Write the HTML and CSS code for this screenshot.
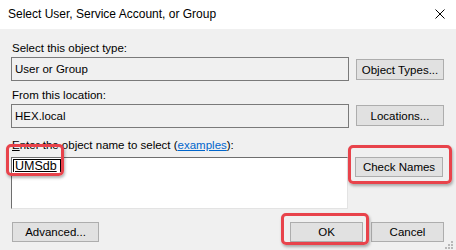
FILE: index.html
```html
<!DOCTYPE html>
<html>
<head>
<meta charset="utf-8">
<link rel="stylesheet" href="styles.css">
</head>
<body>
<div class="dialog">
  <div class="titlebar">
    <span class="title">Select User, Service Account, or Group</span>
    <svg class="close" width="10" height="10" viewBox="0 0 10 10"><path d="M0.5 0.5 L9.5 9.5 M9.5 0.5 L0.5 9.5" stroke="#000" stroke-width="1" fill="none"/></svg>
  </div>
  <div class="content">
    <div class="label l1">Select this object type:</div>
    <div class="row">
      <div class="field">User or Group</div>
      <div class="btn btn-top">Object Types...</div>
    </div>
    <div class="label l2">From this location:</div>
    <div class="row">
      <div class="field">HEX.local</div>
      <div class="btn btn-top">Locations...</div>
    </div>
    <div class="label l3"><span class="ul">E</span>nter the object name to select (<span class="link">examples</span>):</div>
    <div class="row">
      <div class="area"><span class="name">UMSdb</span></div>
      <div class="btn">Check Names</div>
    </div>
    <div class="bottom">
      <div class="btn adv">Advanced...</div>
      <div class="right">
        <div class="btn ok">OK</div>
        <div class="btn cancel">Cancel</div>
      </div>
    </div>
  </div>
  <div class="hl hl-name"></div>
  <div class="hl hl-check"></div>
  <div class="hl hl-ok"></div>
  <svg class="grip" width="8" height="8" viewBox="0 0 8 8">
    <rect x="6" y="0" width="2" height="2" fill="#b8b8b8"/>
    <rect x="3" y="3" width="2" height="2" fill="#b8b8b8"/>
    <rect x="6" y="3" width="2" height="2" fill="#b8b8b8"/>
    <rect x="0" y="6" width="2" height="2" fill="#b8b8b8"/>
    <rect x="3" y="6" width="2" height="2" fill="#b8b8b8"/>
    <rect x="6" y="6" width="2" height="2" fill="#b8b8b8"/>
  </svg>
</div>
</body>
</html>
```

FILE: styles.css
```css
html, body {
  margin: 0;
  padding: 0;
}
body {
  width: 456px;
  height: 250px;
  overflow: hidden;
  font-family: "Liberation Sans", Arial, sans-serif;
  font-size: 11.5px;
  color: #000;
}
.dialog {
  position: relative;
  width: 456px;
  height: 250px;
  background: #f0f0f0;
}
.titlebar {
  height: 29px;
  background: #fff;
  display: flex;
  align-items: center;
  justify-content: space-between;
  padding: 0 11px 0 8px;
  box-sizing: border-box;
}
.title {
  font-size: 12px;
  margin-top: -1px;
}
.close {
  display: block;
  margin-top: -2px;
}
.content {
  padding: 12px 0 0 11px;
}
.label {
  height: 15px;
  line-height: 15px;
  padding-left: 1px;
}
.l2 { margin-top: 7px; }
.l3 { margin-top: 10px; }
.ul { text-decoration: underline; }
.link {
  color: #0066cc;
  text-decoration: underline;
}
.row {
  display: flex;
  column-gap: 7px;
  align-items: flex-start;
  margin-top: 1px;
}
.l3 + .row { margin-top: 4px; }
.field {
  width: 338px;
  height: 24px;
  box-sizing: border-box;
  border: 1px solid #7a7a7a;
  background: #f0f0f0;
  line-height: 22px;
  padding-left: 3px;
}
.area {
  width: 337px;
  height: 52px;
  box-sizing: border-box;
  background: #fff;
  border-top: 1px solid #6e6e6e;
  border-left: 1px solid #6e6e6e;
  border-right: 1px solid #e3e3e3;
  border-bottom: 1px solid #e3e3e3;
  padding: 1px 0 0 1px;
}
.name {
  display: inline-block;
  border: 1px solid #000;
  border-bottom: none;
  height: 12px;
  line-height: 13px;
  padding: 0 3px 0 1px;
  font-size: 12.5px;
  text-decoration: underline;
  text-underline-offset: 1px;
  overflow: visible;
}
.btn {
  width: 88px;
  height: 20px;
  box-sizing: border-box;
  background: #e1e1e1;
  border: 1px solid #adadad;
  display: flex;
  align-items: center;
  justify-content: center;
}
.btn-top { margin-top: 2px; height: 21px; }
.row + .label + .row .btn-top { margin-top: 1px; }
.bottom {
  display: flex;
  justify-content: space-between;
  margin-top: 13px;
  width: 433px;
}
.adv { width: 87px; margin-left: 1px; }
.right {
  display: flex;
  column-gap: 8px;
}
.ok { width: 73px; }
.cancel { width: 73px; }
.hl {
  position: absolute;
  border: 3px solid #e8434b;
  border-radius: 5px;
  box-sizing: border-box;
  box-shadow: 1px 2px 3px rgba(0,0,0,0.3);
}
.hl-name { left: 6px; top: 144px; width: 58px; height: 32px; }
.hl-check { left: 348px; top: 145px; width: 104px; height: 39px; }
.hl-ok { left: 281px; top: 213px; width: 88px; height: 32px; }
.grip {
  position: absolute;
  right: 3px;
  bottom: 1px;
}
```
